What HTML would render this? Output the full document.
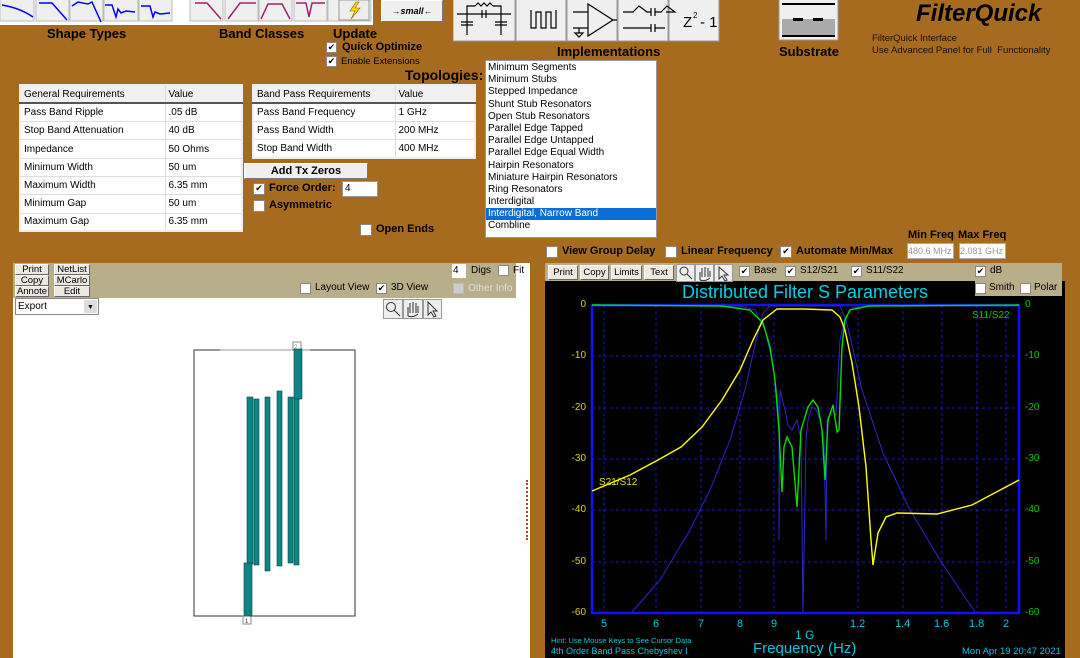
<!DOCTYPE html>
<html><head><meta charset="utf-8"><style>
*{margin:0;padding:0;box-sizing:border-box}
body{width:1080px;height:658px;background:#a66b1e;position:relative;overflow:hidden;font-family:"Liberation Sans",sans-serif;font-size:10px;color:#000}
.a{position:absolute}
.b{font-weight:bold}
.btn{position:absolute;background:#efefef;border:1px solid #fff;border-right-color:#777;border-bottom-color:#777}
.cb{position:absolute;width:11px;height:11px;background:#fff;border:1px solid #888;font-size:9px;line-height:9px;text-align:center}
table{border-collapse:collapse;background:#fff}
td{border:1px solid #ddd;height:18.3px;padding:0 3px;font-size:10px;white-space:nowrap}
tr.h td{background:#f0f0f0;border-bottom:2px solid #555}
.li{height:12.2px;line-height:12px;padding-left:2px;font-size:10px}
.sb{position:absolute;background:#ece9e0;border:1px solid #fff;border-right-color:#666;border-bottom-color:#666;font-size:9.5px;text-align:center;line-height:10px;overflow:hidden;white-space:nowrap}
.yl{position:absolute;color:#d8d800;font-size:10px;text-align:right;width:20px}
.gl{position:absolute;color:#00c800;font-size:10px}
.xl{position:absolute;color:#00c8e0;font-size:11px}
</style></head><body>
<!-- top toolbar -->
<div class="a" style="left:0;top:0;width:373px;height:25px;background:#fff"></div>
<svg class="a" style="left:0;top:0" width="373" height="25">
<g fill="#efefef" stroke="#bbb"><rect x="0" y="-1" width="34" height="22"/><rect x="36" y="-1" width="33" height="22"/><rect x="70" y="-1" width="33" height="22"/><rect x="104" y="-1" width="34" height="22"/><rect x="139" y="-1" width="33" height="22"/><rect x="190" y="-1" width="33" height="22"/><rect x="225" y="-1" width="33" height="22"/><rect x="259" y="-1" width="33" height="22"/><rect x="294" y="-1" width="33" height="22"/><rect x="328" y="-1" width="43" height="22"/></g>
<g fill="none" stroke="#0000ff" stroke-width="1.5"><path d="M2 5 Q20 8 33 17"/><path d="M39 3 H52 L67 20"/><path d="M72 6 L78 2 L88 4 L92 2 L101 22"/><path d="M105 5 H112 L116 17 L118 9 L121 13 L126 11 L135 12"/><path d="M141 6 H150 L153 17 L155 12 L160 14 L170 13"/></g>
<g fill="none" stroke="#a02070" stroke-width="1.5"><path d="M195 3 H207 L221 19"/><path d="M228 19 L240 3 H256"/><path d="M261 19 L268 4 H282 L290 19"/><path d="M296 3 H306 L309 17 L312 3 H325"/></g>
<rect x="339" y="0" width="30" height="20" fill="#eee" stroke="#999"/>
<path d="M356 2 L350 11 L355 11 L351 19 L360 8 L355 8 L359 2Z" fill="#ffd800" stroke="#886600" stroke-width=".6"/>
</svg>
<div class="btn" style="left:381px;top:0;width:62px;height:22px;font-size:9px;font-style:italic;font-weight:bold;text-align:center;line-height:20px">→small←</div>
<div class="a b" style="left:47px;top:26px;font-size:13px">Shape Types</div>
<div class="a b" style="left:219px;top:26px;font-size:13px">Band Classes</div>
<div class="a b" style="left:333px;top:26px;font-size:13px">Update</div>
<div class="cb" style="left:326px;top:42px">✔</div><div class="a b" style="left:342px;top:41px;font-size:11px">Quick Optimize</div>
<div class="cb" style="left:326px;top:56px">✔</div><div class="a" style="left:341px;top:56px;font-size:9.5px">Enable Extensions</div>
<div class="a b" style="left:405px;top:67px;font-size:14px">Topologies:</div>

<!-- implementations -->
<svg class="a" style="left:453px;top:0" width="400" height="42">
<g fill="#efefef" stroke="#999"><rect x="0" y="-1" width="62" height="42"/><rect x="63" y="-1" width="50" height="42"/><rect x="114" y="-1" width="50" height="42"/><rect x="165" y="-1" width="50" height="42"/><rect x="216" y="-1" width="50" height="42"/><rect x="326" y="-1" width="59" height="41"/></g>
<g fill="none" stroke="#000" stroke-width="1.2">
<path d="M4 14 H58 M14 14 V35 M48 14 V35 M8 22 H20 M8 25 H20 M42 22 H54 M42 25 H54 M14 14 V6 H22 M40 6 H48 V14 M22 6 L25 3 L28 6 L31 3 L34 6 L37 3 L40 6 M20 14 H29 M33 14 H42 M29 10 V18 M33 10 V18"/>
<path d="M78 10 V28 H83 V12 H88 V28 H93 V12 H98 V28 H103 V10"/>
<path d="M135 4 V36 L160 20 Z M160 20 H164 M120 12 H135 M120 28 H135 M126 28 V33 M122 33 H130 L126 37Z"/>
<path d="M170 12 H180 L186 6 L194 12 H198 M202 12 H208 L214 6 L222 12 H213 M198 8 V16 M202 8 V16 M170 28 H198 M202 28 H212 M198 24 V32 M202 24 V32"/>
</g>
<text x="230" y="27" font-size="15" font-family="Liberation Sans">Z</text><text x="240" y="18" font-size="8" font-family="Liberation Sans">2</text><text x="247" y="27" font-size="15" font-family="Liberation Sans">- 1</text>
<rect x="329" y="3" width="53" height="2" fill="#000"/><rect x="329" y="19" width="53" height="16" fill="#aaa"/><rect x="340" y="18" width="10" height="3" fill="#000"/><rect x="360" y="18" width="10" height="3" fill="#000"/><rect x="329" y="35" width="53" height="2" fill="#000"/>
</svg>
<div class="a b" style="left:557px;top:44px;font-size:13px">Implementations</div>
<div class="a b" style="left:779px;top:44px;font-size:13px">Substrate</div>
<div class="a b" style="left:916px;top:0;font-size:24px;font-style:italic">FilterQuick</div>
<div class="a" style="left:872px;top:33px;font-size:9.5px;color:#111">FilterQuick Interface</div>
<div class="a" style="left:872px;top:45px;font-size:9.5px;color:#111">Use Advanced Panel for Full &nbsp;Functionality</div>

<!-- tables -->
<table class="a" style="left:19px;top:84px;width:224px;border:2px solid #eee">
<tr class="h"><td style="width:145px">General Requirements</td><td>Value</td></tr>
<tr><td>Pass Band Ripple</td><td>.05 dB</td></tr><tr><td>Stop Band Attenuation</td><td>40 dB</td></tr><tr><td>Impedance</td><td>50 Ohms</td></tr><tr><td>Minimum Width</td><td>50 um</td></tr><tr><td>Maximum Width</td><td>6.35 mm</td></tr><tr><td>Minimum Gap</td><td>50 um</td></tr><tr><td>Maximum Gap</td><td>6.35 mm</td></tr></table>
<table class="a" style="left:252px;top:84px;width:224px;border:2px solid #eee">
<tr class="h"><td style="width:142px">Band Pass Requirements</td><td>Value</td></tr>
<tr><td>Pass Band Frequency</td><td>1 GHz</td></tr><tr><td>Pass Band Width</td><td>200 MHz</td></tr><tr><td>Stop Band Width</td><td>400 MHz</td></tr></table>
<div class="btn b" style="left:244px;top:163px;width:124px;height:16px;font-size:11px;text-align:center;line-height:14px">Add Tx Zeros</div>
<div class="cb" style="left:253px;top:183px;width:12px;height:12px">✔</div><div class="a b" style="left:269px;top:182px;font-size:11px">Force Order:</div>
<div class="a" style="left:342px;top:181px;width:36px;height:16px;background:#fff;border:1px solid #999;padding-left:2px;line-height:14px">4</div>
<div class="cb" style="left:253px;top:200px;width:12px;height:12px"></div><div class="a b" style="left:269px;top:199px;font-size:11px">Asymmetric</div>
<div class="cb" style="left:360px;top:224px;width:12px;height:12px"></div><div class="a b" style="left:376px;top:223px;font-size:11px">Open Ends</div>

<!-- list -->
<div class="a" style="left:485px;top:60px;width:172px;height:178px;background:#fff;border:1px solid #999;padding-top:1px">
<div class="li">Minimum Segments</div><div class="li">Minimum Stubs</div><div class="li">Stepped Impedance</div><div class="li">Shunt Stub Resonators</div><div class="li">Open Stub Resonators</div><div class="li">Parallel Edge Tapped</div><div class="li">Parallel Edge Untapped</div><div class="li">Parallel Edge Equal Width</div><div class="li">Hairpin Resonators</div><div class="li">Miniature Hairpin Resonators</div><div class="li">Ring Resonators</div><div class="li">Interdigital</div><div class="li" style="background:#0a6ed6;color:#fff">Interdigital, Narrow Band</div><div class="li">Combline</div></div>

<div class="cb" style="left:546px;top:246px;width:12px;height:12px"></div><div class="a b" style="left:562px;top:245px;font-size:11px">View Group Delay</div>
<div class="cb" style="left:665px;top:246px;width:12px;height:12px"></div><div class="a b" style="left:681px;top:245px;font-size:11px">Linear Frequency</div>
<div class="cb" style="left:780px;top:246px;width:12px;height:12px">✔</div><div class="a b" style="left:796px;top:245px;font-size:11px">Automate Min/Max</div>
<div class="a b" style="left:908px;top:229px;font-size:11px">Min Freq</div><div class="a b" style="left:958px;top:229px;font-size:11px">Max Freq</div>
<div class="a" style="left:907px;top:243px;width:47px;height:16px;background:#fff;border:1px solid #aaa;color:#999;font-size:9px;line-height:14px;overflow:hidden;white-space:nowrap">480.6 MHz</div>
<div class="a" style="left:959px;top:243px;width:47px;height:16px;background:#fff;border:1px solid #aaa;color:#999;font-size:9px;line-height:14px;white-space:nowrap;overflow:hidden">2.081 GHz</div>

<!-- left pane -->
<div class="a" style="left:13px;top:263px;width:517px;height:395px;background:#fff"></div>
<div class="a" style="left:13px;top:263px;width:503px;height:35px;background:#b9ae8a"></div>
<div class="sb" style="left:15px;top:264px;width:34px;height:11px">Print</div><div class="sb" style="left:54px;top:264px;width:36px;height:11px">NetList</div>
<div class="sb" style="left:15px;top:275px;width:34px;height:11px">Copy</div><div class="sb" style="left:54px;top:275px;width:36px;height:11px">MCarlo</div>
<div class="sb" style="left:15px;top:286px;width:34px;height:11px">Annote</div><div class="sb" style="left:54px;top:286px;width:36px;height:11px">Edit</div>
<div class="a" style="left:15px;top:298px;width:84px;height:17px;border:1px solid #888;background:#fff;font-size:10px;padding-left:2px;line-height:15px">Export<span style="position:absolute;right:1px;top:1px;width:13px;height:13px;background:#ddd;font-size:7px;text-align:center">▼</span></div>
<div class="cb" style="left:300px;top:283px">  </div><div class="a" style="left:315px;top:282px">Layout View</div>
<div class="cb" style="left:376px;top:283px">✔</div><div class="a" style="left:391px;top:282px">3D View</div>
<div class="a" style="left:452px;top:264px;width:14px;height:14px;background:#fff;line-height:14px;padding-left:1px">4</div><div class="a" style="left:471px;top:265px">Digs</div>
<div class="cb" style="left:498px;top:265px"></div><div class="a" style="left:513px;top:265px">Fit</div>
<div class="cb" style="left:453px;top:283px;background:#ccc;border-color:#bbb"></div><div class="a" style="left:468px;top:283px;color:#ddd">Other Info</div>
<svg class="a" style="left:383px;top:299px" width="60" height="20"><g fill="#eee" stroke="#999"><rect x=".5" y=".5" width="19" height="19"/><rect x="20.5" y=".5" width="19" height="19"/><rect x="40.5" y=".5" width="18" height="19"/></g><g fill="none" stroke="#333"><circle cx="8" cy="8" r="4.5"/><path d="M11 11 L17 17 M25 17 V8 M27 14 V4 M30 14 V3 M33 14 V4 M35 14 V7 M25 17 Q30 19 35 15 M45 3 L45 16 L48 13 L51 18 L53 17 L50 12 L54 12Z"/></g></svg>
<!-- layout drawing -->
<svg class="a" style="left:180px;top:330px" width="200" height="300">
<rect x="14" y="20" width="161" height="266" fill="none" stroke="#333"/>
<path d="M40 20 H130" stroke="#ccc" stroke-width="2"/>
<rect x="113" y="12" width="8" height="8" fill="#fff" stroke="#888"/><text x="114" y="19" font-size="6" fill="#888">2</text>
<rect x="63" y="286" width="8" height="8" fill="#fff" stroke="#888"/><text x="65" y="293" font-size="6" fill="#333">1</text>
<g fill="#0e8585" stroke="#104040" stroke-width=".6">
<rect x="67" y="67" width="6" height="167"/><rect x="74" y="69" width="5" height="166"/><rect x="85" y="67" width="5" height="174"/><rect x="97" y="61" width="5" height="175"/><rect x="108" y="67" width="5" height="166"/><rect x="114" y="67" width="5" height="168"/><rect x="114" y="19" width="8" height="50"/><rect x="64" y="233" width="8" height="53"/></g>
</svg>
<div class="a" style="left:526px;top:480px;width:3px;height:60px;border-left:2px dotted #c04020"></div>

<!-- right pane -->
<div class="a" style="left:545px;top:263px;width:517px;height:18px;background:#b9ae8a"></div>
<div class="a" style="left:545px;top:281px;width:520px;height:377px;background:#000"></div>
<div class="a" style="left:975px;top:280px;width:87px;height:16px;background:#b9ae8a"></div>
<div class="sb" style="left:548px;top:265px;width:30px;height:15px;line-height:13px">Print</div><div class="sb" style="left:580px;top:265px;width:29px;height:15px;line-height:13px">Copy</div><div class="sb" style="left:611px;top:265px;width:31px;height:15px;line-height:13px">Limits</div><div class="sb" style="left:644px;top:265px;width:30px;height:15px;line-height:13px">Text</div>
<svg class="a" style="left:676px;top:264px" width="58" height="18"><g fill="#eee" stroke="#999"><rect x=".5" y=".5" width="18" height="17"/><rect x="19.5" y=".5" width="18" height="17"/><rect x="38.5" y=".5" width="18" height="17"/></g><g fill="none" stroke="#333"><circle cx="8" cy="7" r="4"/><path d="M11 10 L16 15 M24 16 V8 M26 13 V4 M29 13 V3 M32 13 V4 M34 13 V7 M24 16 Q29 18 34 14 M43 3 L43 15 L46 12 L49 17 L51 16 L48 11 L52 11Z"/></g></svg>
<div class="cb" style="left:739px;top:266px">✔</div><div class="a" style="left:754px;top:265px">Base</div>
<div class="cb" style="left:785px;top:266px">✔</div><div class="a" style="left:800px;top:265px">S12/S21</div>
<div class="cb" style="left:851px;top:266px">✔</div><div class="a" style="left:866px;top:265px">S11/S22</div>
<div class="cb" style="left:975px;top:266px">✔</div><div class="a" style="left:990px;top:265px">dB</div>
<div class="cb" style="left:975px;top:283px"></div><div class="a" style="left:989px;top:282px">Smith</div>
<div class="cb" style="left:1020px;top:283px"></div><div class="a" style="left:1034px;top:282px">Polar</div>
<div class="a" style="left:545px;top:282px;width:520px;text-align:center;color:#00d0e0;font-size:18px;line-height:20px">Distributed Filter S Parameters</div>

<svg class="a" style="left:0;top:0" width="1080" height="658">
<g stroke="#2020ff" stroke-width=".8" stroke-dasharray="3,3">
<path d="M604 305V613M656 305V613M701 305V613M740 305V613M774 305V613M858 305V613M903 305V613M942 305V613M977 305V613M1006 305V613"/>
<path d="M592 356H1019M592 408H1019M592 459H1019M592 510H1019M592 562H1019"/></g>
<rect x="592" y="305" width="427" height="308" fill="none" stroke="#1010ff" stroke-width="2.5"/>
<g fill="none" stroke="#2828c8" stroke-width="1">
<polyline points="632,612 660,580 690,530 710,490 730,440 745,390 755,345 763,313 770,306 840,306 846,320 852,345 862,390 883,453 910,510 940,560 975,612"/>
<polyline points="592,306 740,306 755,310 765,330 772,360 778,400 779,440 779,540 780,390 785,410 788,425 792,430 797,420 801,440 803,612 806,440 808,420 812,407 816,410 820,420 824,440 826,540 827,420 832,410 836,415 840,340 845,318 852,308 869,306 1019,306"/>
</g>
<polyline fill="none" stroke="#00e000" stroke-width="1.4" points="592,305 722,306 750,310 763,323 770,347 775,380 779,430 782,492 784,447 787,437 792,447 797,507 801,430 808,407 813,400 818,407 822,430 825,480 828,420 833,405 837,432 839,430 842,347 845,320 850,310 869,306 1019,305"/>
<polyline fill="none" stroke="#ffff00" stroke-width="1.4" points="592,491 630,475 658,460 681,447 702,427 722,400 740,370 753,340 763,320 777,309 804,309 832,310 840,317 845,330 852,363 859,407 866,467 871,540 873,565 878,533 886,517 897,513 937,514 972,505 1019,480"/>
</svg>
<div class="yl" style="left:566px;top:299px">0</div><div class="yl" style="left:566px;top:350px">-10</div><div class="yl" style="left:566px;top:402px">-20</div><div class="yl" style="left:566px;top:453px">-30</div><div class="yl" style="left:566px;top:504px">-40</div><div class="yl" style="left:566px;top:556px">-50</div><div class="yl" style="left:566px;top:607px">-60</div>
<div class="gl" style="left:1025px;top:299px">0</div><div class="gl" style="left:1025px;top:350px">-10</div><div class="gl" style="left:1025px;top:402px">-20</div><div class="gl" style="left:1025px;top:453px">-30</div><div class="gl" style="left:1025px;top:504px">-40</div><div class="gl" style="left:1025px;top:556px">-50</div><div class="gl" style="left:1025px;top:607px">-60</div>
<div class="gl" style="left:972px;top:310px">S11/S22</div>
<div class="a" style="left:599px;top:477px;color:#e0e000;font-size:10px">S21/S12</div>
<div class="xl" style="left:601px;top:618px">5</div><div class="xl" style="left:653px;top:618px">6</div><div class="xl" style="left:698px;top:618px">7</div><div class="xl" style="left:737px;top:618px">8</div><div class="xl" style="left:771px;top:618px">9</div><div class="xl" style="left:850px;top:618px">1.2</div><div class="xl" style="left:895px;top:618px">1.4</div><div class="xl" style="left:934px;top:618px">1.6</div><div class="xl" style="left:969px;top:618px">1.8</div><div class="xl" style="left:1003px;top:618px">2</div>
<div class="xl" style="left:795px;top:628px;font-size:12px">1 G</div>
<div class="xl" style="left:753px;top:640px;font-size:15px">Frequency (Hz)</div>
<div class="a" style="left:551px;top:636px;color:#00c8e0;font-size:7.5px">Hint: Use Mouse Keys to See Cursor Data</div>
<div class="a" style="left:551px;top:646px;color:#00c8e0;font-size:9px">4th Order Band Pass Chebyshev I</div>
<div class="a" style="left:962px;top:646px;color:#00c8e0;font-size:9.5px">Mon Apr 19 20:47 2021</div>
</body></html>
